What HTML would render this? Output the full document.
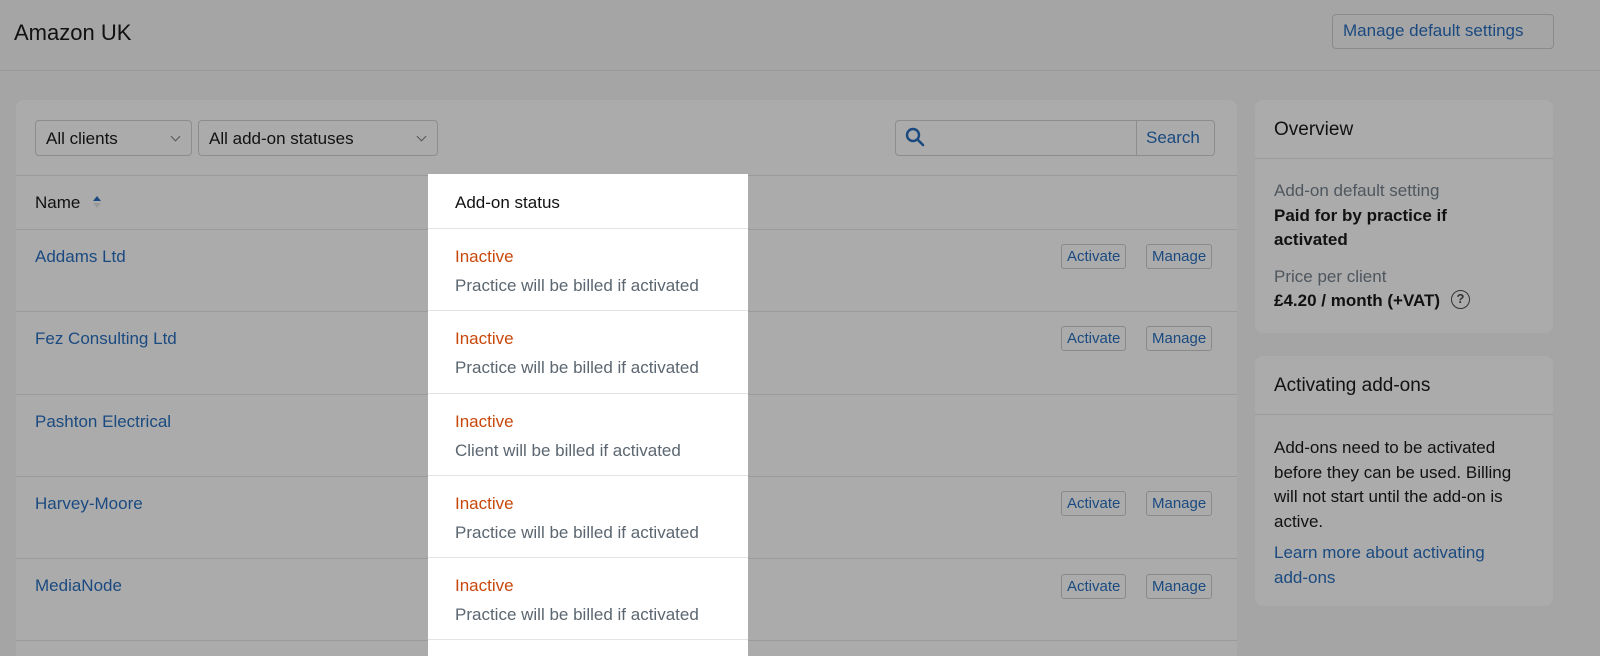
<!DOCTYPE html>
<html style="width:1600px;height:656px;overflow:hidden"><head><style>
*{box-sizing:border-box;margin:0;padding:0}
body{width:1600px;height:656px;background:#a5a5a5;font-family:"Liberation Sans",sans-serif;position:relative;overflow:hidden;color:#111}
.a{position:absolute}
.card{background:#ababab;border-radius:8px}
.link{color:#1a4a80;font-size:17px}
.sel{border:1px solid #8d8d8d;border-radius:4px;height:36px;font-size:17px;padding:8px 10px;color:#111}
.sel:after{content:"";position:absolute;right:12px;top:12px;width:6px;height:6px;border-right:1.5px solid #555;border-bottom:1.5px solid #555;transform:rotate(45deg)}
.line{height:1px;background:#9a9a9a}
.btn{border:1px solid #8a8a8a;border-radius:3px;height:25px;font-size:15px;color:#1a4a80;padding:3px 5px;line-height:17px}
.st{font-size:17px}
.inact{color:#c8480c}
.sub{color:#5b6670}
</style></head><body>
<div class="a" style="left:14px;top:20px;font-size:22px">Amazon UK</div>
<div class="a btn" style="left:1332px;top:14px;width:222px;height:35px;font-size:17px;padding:7px 10px;border-radius:4px">Manage default settings</div>
<div class="a line" style="left:0;top:70px;width:1600px"></div>

<div class="a card" style="left:16px;top:100px;width:1221px;height:556px;border-radius:8px 8px 0 0"></div>
<div class="a sel" style="left:35px;top:120px;width:157px">All clients</div>
<div class="a sel" style="left:198px;top:120px;width:240px">All add-on statuses</div>
<div class="a" style="left:895px;top:120px;width:320px;height:36px;border:1px solid #8d8d8d;border-radius:4px"></div>
<div class="a" style="left:1136px;top:120px;width:1px;height:36px;background:#8d8d8d"></div>
<div class="a link" style="left:1146px;top:128px">Search</div>
<svg class="a" style="left:905px;top:127px" width="20" height="20" viewBox="0 0 20 20"><circle cx="8" cy="8" r="6" fill="none" stroke="#1a4a80" stroke-width="2.4"/><path d="M12.5 12.5L18 18" stroke="#1a4a80" stroke-width="2.6" stroke-linecap="round"/></svg>

<div class="a line" style="left:16px;top:175px;width:1221px"></div>
<div class="a" style="left:35px;top:193px;font-size:17px">Name</div>
<svg class="a" style="left:92px;top:195px" width="10" height="14"><path d="M1 6L5 1L9 6Z" fill="#1a4a80"/><path d="M1 8L5 13L9 8Z" fill="#999"/></svg>

<div class="a line" style="left:16px;top:229px;width:1221px"></div>
<div class="a line" style="left:16px;top:311px;width:1221px"></div>
<div class="a line" style="left:16px;top:394px;width:1221px"></div>
<div class="a line" style="left:16px;top:476px;width:1221px"></div>
<div class="a line" style="left:16px;top:558px;width:1221px"></div>
<div class="a line" style="left:16px;top:640px;width:1221px"></div>

<div class="a link" style="left:35px;top:247px">Addams Ltd</div>
<div class="a link" style="left:35px;top:329px">Fez Consulting Ltd</div>
<div class="a link" style="left:35px;top:412px">Pashton Electrical</div>
<div class="a link" style="left:35px;top:494px">Harvey-Moore</div>
<div class="a link" style="left:35px;top:576px">MediaNode</div>

<div class="a btn" style="left:1061px;top:244px">Activate</div><div class="a btn" style="left:1146px;top:244px">Manage</div>
<div class="a btn" style="left:1061px;top:326px">Activate</div><div class="a btn" style="left:1146px;top:326px">Manage</div>
<div class="a btn" style="left:1061px;top:491px">Activate</div><div class="a btn" style="left:1146px;top:491px">Manage</div>
<div class="a btn" style="left:1061px;top:574px">Activate</div><div class="a btn" style="left:1146px;top:574px">Manage</div>

<div class="a" style="left:428px;top:174px;width:320px;height:482px;background:#fff"></div>
<div class="a" style="left:428px;top:228px;width:320px;height:1px;background:#e3e3e3"></div>
<div class="a" style="left:428px;top:310px;width:320px;height:1px;background:#e3e3e3"></div>
<div class="a" style="left:428px;top:393px;width:320px;height:1px;background:#e3e3e3"></div>
<div class="a" style="left:428px;top:475px;width:320px;height:1px;background:#e3e3e3"></div>
<div class="a" style="left:428px;top:557px;width:320px;height:1px;background:#e3e3e3"></div>
<div class="a" style="left:428px;top:639px;width:320px;height:1px;background:#e3e3e3"></div>
<div class="a st" style="left:455px;top:193px">Add-on status</div>
<div class="a st inact" style="left:455px;top:247px">Inactive</div><div class="a st sub" style="left:455px;top:276px">Practice will be billed if activated</div>
<div class="a st inact" style="left:455px;top:329px">Inactive</div><div class="a st sub" style="left:455px;top:358px">Practice will be billed if activated</div>
<div class="a st inact" style="left:455px;top:412px">Inactive</div><div class="a st sub" style="left:455px;top:441px">Client will be billed if activated</div>
<div class="a st inact" style="left:455px;top:494px">Inactive</div><div class="a st sub" style="left:455px;top:523px">Practice will be billed if activated</div>
<div class="a st inact" style="left:455px;top:576px">Inactive</div><div class="a st sub" style="left:455px;top:605px">Practice will be billed if activated</div>

<div class="a card" style="left:1255px;top:100px;width:298px;height:233px"></div>
<div class="a" style="left:1274px;top:119px;font-size:19px">Overview</div>
<div class="a line" style="left:1255px;top:158px;width:298px"></div>
<div class="a" style="left:1274px;top:181px;font-size:17px;color:#4e565e">Add-on default setting</div>
<div class="a" style="left:1274px;top:204px;font-size:17px;font-weight:bold;line-height:24px;width:220px">Paid for by practice if activated</div>
<div class="a" style="left:1274px;top:267px;font-size:17px;color:#4e565e">Price per client</div>
<div class="a" style="left:1274px;top:291px;font-size:17px;font-weight:bold">£4.20 / month (+VAT)</div>
<div class="a" style="left:1451px;top:290px;width:19px;height:19px;border:1.6px solid #333;border-radius:50%;font-size:13px;text-align:center;line-height:16px;font-weight:bold;color:#333">?</div>

<div class="a card" style="left:1255px;top:356px;width:298px;height:250px"></div>
<div class="a" style="left:1274px;top:375px;font-size:19px">Activating add-ons</div>
<div class="a line" style="left:1255px;top:414px;width:298px"></div>
<div class="a" style="left:1274px;top:436px;font-size:17px;line-height:24.5px;width:260px">Add-ons need to be activated before they can be used. Billing will not start until the add-on is active.</div>
<div class="a link" style="left:1274px;top:541px;line-height:24.5px;width:240px">Learn more about activating add-ons</div>
</body></html>
